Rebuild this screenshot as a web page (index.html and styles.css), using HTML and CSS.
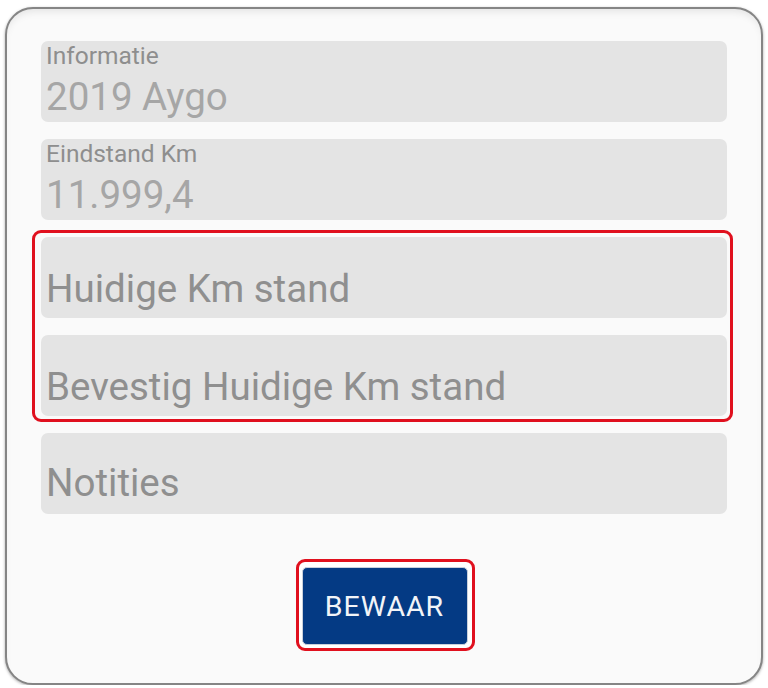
FILE: index.html
```html
<!DOCTYPE html>
<html>
<head>
<meta charset="utf-8">
<link rel="stylesheet" href="styles.css">
</head>
<body>
<div class="card">
  <div class="field filled">
    <div class="label">Informatie</div>
    <div class="value">2019 Aygo</div>
  </div>
  <div class="field filled">
    <div class="label">Eindstand Km</div>
    <div class="value">11.999,4</div>
  </div>
  <div class="group">
    <div class="field empty"><div class="placeholder">Huidige Km stand</div></div>
    <div class="field empty"><div class="placeholder">Bevestig Huidige Km stand</div></div>
  </div>
  <div class="field empty notes"><div class="placeholder">Notities</div></div>
  <div class="actions">
    <div class="btn-ring"><button class="btn">BEWAAR</button></div>
  </div>
</div>
</body>
</html>
```
FILE: styles.css
```css
html, body {
  margin: 0;
  padding: 0;
  background: #ffffff;
  font-family: Roboto, "Noto Sans", sans-serif;
}
.card {
  box-sizing: border-box;
  margin: 7px 0 0 5px;
  width: 758px;
  height: 678px;
  border: 2px solid #858585;
  border-radius: 28px;
  background: #fafafa;
  box-shadow: 0 1px 3px rgba(0,0,0,0.35), inset 0 6px 8px -4px rgba(0,0,0,0.10);
  padding: 32px 34px 0 34px;
  display: flex;
  flex-direction: column;
}
.field {
  box-sizing: border-box;
  height: 81px;
  background: #e4e4e4;
  border-radius: 7px;
  padding-left: 5px;
  flex: none;
}
.filled + .filled { margin-top: 17px; }
.filled { padding-top: 0; }
.label {
  font-size: 24.5px;
  line-height: 30px;
  color: #8e8e8e;
}
.value {
  margin-top: 3px;
  font-size: 38.5px;
  line-height: 45px;
  color: #a6a6a6;
}
.empty { padding-top: 29px; }
.placeholder {
  font-size: 38.5px;
  line-height: 45px;
  color: #8f8f8f;
}
.group {
  margin: 10px -6px 0 -9px;
  border: 3px solid #e0101e;
  border-radius: 9px;
  padding: 4px 3px 3px 6px;
  display: flex;
  flex-direction: column;
  gap: 17px;
}
.notes { margin-top: 11px; padding-top: 27px; }
.actions {
  display: flex;
  justify-content: center;
  margin-top: 45px;
  padding-left: 2px;
}
.btn-ring {
  border: 3px solid #e0101e;
  border-radius: 9px;
  padding: 5px 4px 3px 3px;
  background: #ffffff;
}
.btn {
  display: block;
  width: 166px;
  height: 78px;
  border: 1px solid #c9d0dc;
  border-radius: 5px;
  background: #043a84;
  color: #f2f4f8;
  font-family: Roboto, "Noto Sans", sans-serif;
  font-size: 28.5px;
  letter-spacing: 1px;
  padding: 0;
}
```
